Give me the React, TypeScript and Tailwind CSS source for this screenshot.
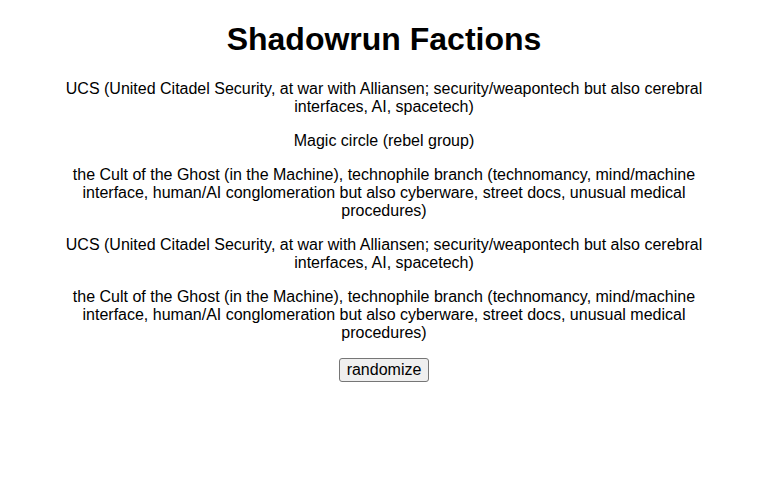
import { useState } from "react";

const factions = [
  "UCS (United Citadel Security, at war with Alliansen; security/weapontech but also cerebral interfaces, AI, spacetech)",
  "Magic circle (rebel group)",
  "the Cult of the Ghost (in the Machine), technophile branch (technomancy, mind/machine interface, human/AI conglomeration but also cyberware, street docs, unusual medical procedures)",
];

const initial = [0, 1, 2, 0, 2];

export default function App() {
  const [picks, setPicks] = useState<number[]>(initial);

  const randomize = () => {
    setPicks(picks.map(() => Math.floor(Math.random() * factions.length)));
  };

  return (
    <div className="min-h-screen bg-white text-black font-['Liberation_Sans',Arial,sans-serif]">
      <div className="mx-auto max-w-[640px] text-center">
        <h1 className="pt-[21px] pb-[22px] text-[32px] font-bold leading-[37px]">
          Shadowrun Factions
        </h1>
        <div className="flex flex-col gap-4">
          {picks.map((p, i) => (
            <p key={i} className="text-base leading-[18px]">
              {factions[p]}
            </p>
          ))}
        </div>
        <div className="mt-4">
          <button
            onClick={randomize}
            className="h-[24px] rounded-[3px] border border-[#767676] bg-[#efefef] px-[7px] text-base leading-[18px] text-black"
          >
            randomize
          </button>
        </div>
      </div>
    </div>
  );
}
